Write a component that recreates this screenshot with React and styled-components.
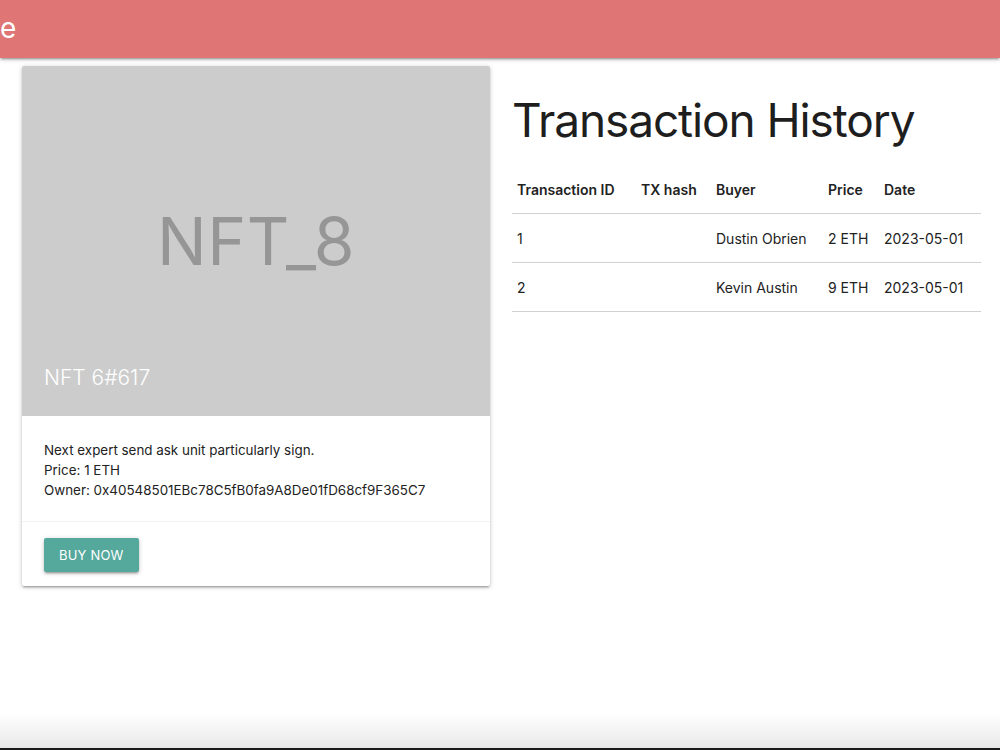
import React from 'react';
import styled, { createGlobalStyle } from 'styled-components';

const GlobalStyle = createGlobalStyle`
  html, body {
    margin: 0;
    padding: 0;
    background: #fff;
    font-family: Inter, "Liberation Sans", Arial, sans-serif;
    color: rgba(0, 0, 0, 0.87);
  }
  * {
    box-sizing: border-box;
  }
`;

const Navbar = styled.nav`
  height: 58px;
  background: #e07575;
  box-shadow: 0 2px 2px 0 rgba(0, 0, 0, 0.14), 0 3px 1px -2px rgba(0, 0, 0, 0.12),
    0 1px 5px 0 rgba(0, 0, 0, 0.2);
  display: flex;
  align-items: center;
  overflow: hidden;
`;

const Brand = styled.span`
  color: #fff;
  font-size: 28px;
  font-weight: 400;
  line-height: 1;
  margin-top: -2px;
`;

const Page = styled.main`
  display: grid;
  grid-template-columns: 468px 469px;
  column-gap: 22px;
  padding: 8px 19px 20px 22px;
  align-items: start;
`;

const Card = styled.div`
  background: #fff;
  border-radius: 2px;
  box-shadow: 0 2px 2px 0 rgba(0, 0, 0, 0.14), 0 3px 1px -2px rgba(0, 0, 0, 0.12),
    0 1px 5px 0 rgba(0, 0, 0, 0.2);
  overflow: hidden;
`;

const CardImage = styled.div`
  position: relative;
  height: 350px;
  background: #cccccc;
  display: flex;
  align-items: center;
  justify-content: center;
`;

const Placeholder = styled.span`
  color: #969696;
  font-size: 66px;
  font-weight: 400;
  letter-spacing: 0.5px;
  line-height: 1;
`;

const CardTitle = styled.span`
  position: absolute;
  left: 0;
  bottom: 0;
  padding: 22px;
  color: #fff;
  font-size: 21px;
  font-weight: 300;
  line-height: 32px;
`;

const CardContent = styled.div`
  padding: 24px 22px 21px;
  border-bottom: 1px solid rgba(160, 160, 160, 0.15);

  p {
    margin: 0;
    font-size: 13.4px;
    line-height: 20px;
    color: #222;
  }
`;

const CardAction = styled.div`
  padding: 16px 22px 14px;
`;

const Button = styled.button`
  height: 34px;
  padding: 0 15px;
  border: none;
  border-radius: 2px;
  background: #55a89c;
  color: #fff;
  font-family: inherit;
  font-size: 13px;
  letter-spacing: 0.2px;
  text-transform: uppercase;
  box-shadow: 0 2px 2px 0 rgba(0, 0, 0, 0.14), 0 3px 1px -2px rgba(0, 0, 0, 0.12),
    0 1px 5px 0 rgba(0, 0, 0, 0.2);
  cursor: pointer;
`;

const Heading = styled.h2`
  margin: 22px 0 0 0;
  font-size: 46px;
  font-weight: 400;
  line-height: 64px;
  color: #1e1e1e;
  letter-spacing: -1.1px;
`;

const Table = styled.table`
  width: 100%;
  margin-top: 13px;
  border-collapse: collapse;
  table-layout: fixed;
  font-size: 14px;
  color: #222;

  tr {
    border-bottom: 1px solid #d0d0d0;
  }
`;

const Th = styled.th`
  width: ${p => p.w}px;
  text-align: left;
  font-weight: 600;
  padding: 16px 5px 15px;
  line-height: 17px;
`;

const Td = styled.td`
  padding: 16px 5px 15px;
  line-height: 17px;
`;

const BottomFade = styled.div`
  position: fixed;
  left: 0;
  right: 0;
  bottom: 0;
  height: 36px;
  background: linear-gradient(to bottom, rgba(255, 255, 255, 0), rgba(232, 232, 232, 1));
  border-bottom: 2px solid #1a1a1a;
  pointer-events: none;
`;

const columns = [
  { label: 'Transaction ID', w: 124 },
  { label: 'TX hash', w: 75 },
  { label: 'Buyer', w: 112 },
  { label: 'Price', w: 56 },
  { label: 'Date', w: 102 }
];

const transactions = [
  { id: 1, hash: '', buyer: 'Dustin Obrien', price: '2 ETH', date: '2023-05-01' },
  { id: 2, hash: '', buyer: 'Kevin Austin', price: '9 ETH', date: '2023-05-01' }
];

function App() {
  return (
    <>
      <GlobalStyle />
      <Navbar>
        <Brand>e</Brand>
      </Navbar>
      <Page>
        <Card>
          <CardImage>
            <Placeholder>NFT_8</Placeholder>
            <CardTitle>NFT 6#617</CardTitle>
          </CardImage>
          <CardContent>
            <p>Next expert send ask unit particularly sign.</p>
            <p>Price: 1 ETH</p>
            <p>Owner: 0x40548501EBc78C5fB0fa9A8De01fD68cf9F365C7</p>
          </CardContent>
          <CardAction>
            <Button>Buy now</Button>
          </CardAction>
        </Card>
        <section>
          <Heading>Transaction History</Heading>
          <Table>
            <thead>
              <tr>
                {columns.map(c => (
                  <Th key={c.label} w={c.w}>
                    {c.label}
                  </Th>
                ))}
              </tr>
            </thead>
            <tbody>
              {transactions.map(t => (
                <tr key={t.id}>
                  <Td>{t.id}</Td>
                  <Td>{t.hash}</Td>
                  <Td>{t.buyer}</Td>
                  <Td>{t.price}</Td>
                  <Td>{t.date}</Td>
                </tr>
              ))}
            </tbody>
          </Table>
        </section>
      </Page>
      <BottomFade />
    </>
  );
}

export default App;
